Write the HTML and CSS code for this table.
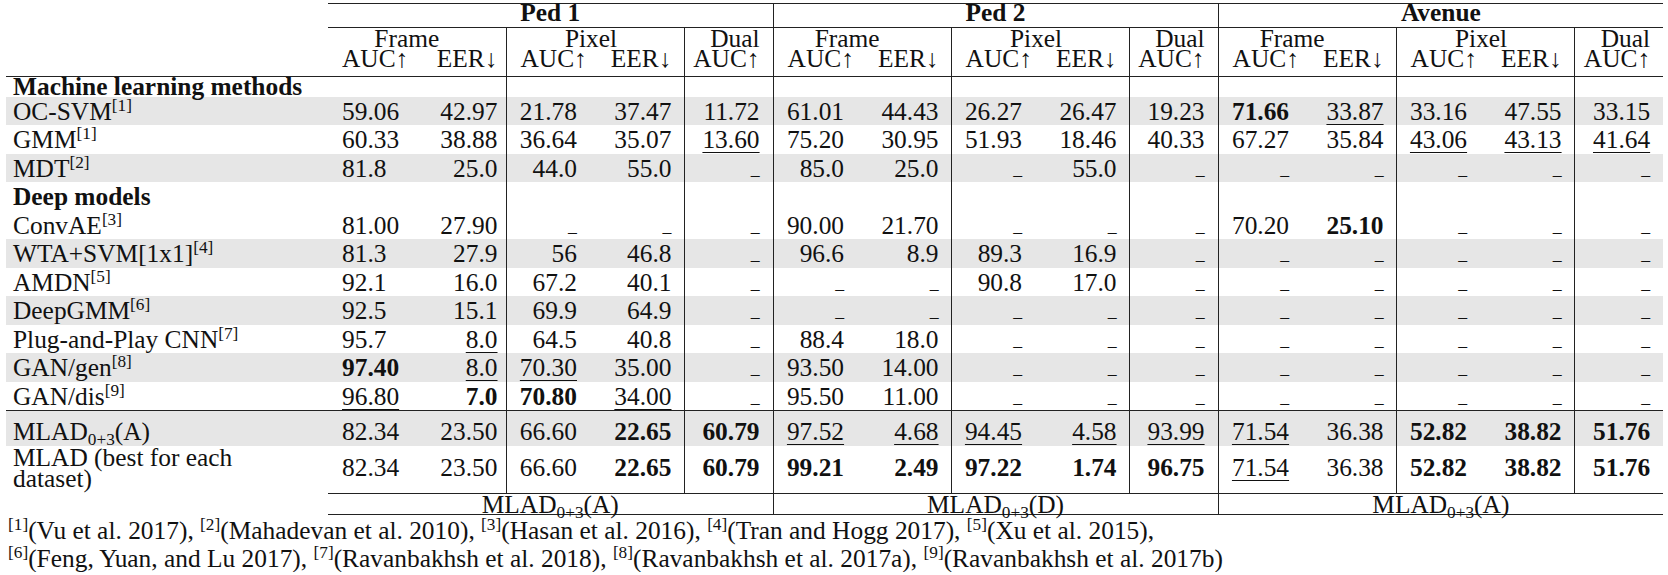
FILE: index.html
```html
<!DOCTYPE html>
<html lang="en">
<head>
  <meta charset="UTF-8">
  <title>Anomaly detection results</title>
  <link rel="stylesheet" href="styles.css">
</head>
<body>
  <div class="page">
    <table class="results">
      <colgroup>
        <col class="c-label">
        <col span="15" class="c-num">
      </colgroup>
      <thead>
        <tr class="grp">
          <th></th>
          <th colspan="5">Ped 1</th>
          <th colspan="5">Ped 2</th>
          <th colspan="5">Avenue</th>
        </tr>
        <tr class="sub">
          <th></th>
          <th colspan="2" class="frame first">Frame</th><th colspan="2" class="pixel">Pixel</th><th class="dual">Dual</th>
          <th colspan="2" class="frame">Frame</th><th colspan="2" class="pixel">Pixel</th><th class="dual">Dual</th>
          <th colspan="2" class="frame">Frame</th><th colspan="2" class="pixel">Pixel</th><th class="dual">Dual</th>
        </tr>
        <tr class="metric">
          <th></th>
          <th>AUC↑</th><th>EER↓</th><th>AUC↑</th><th>EER↓</th><th>AUC↑</th>
          <th>AUC↑</th><th>EER↓</th><th>AUC↑</th><th>EER↓</th><th>AUC↑</th>
          <th>AUC↑</th><th>EER↓</th><th>AUC↑</th><th>EER↓</th><th>AUC↑</th>
        </tr>
      </thead>
      <tbody>
        <tr class="section lead">
          <td>Machine learning methods</td>
          <td></td><td></td><td></td><td></td><td></td>
          <td></td><td></td><td></td><td></td><td></td>
          <td></td><td></td><td></td><td></td><td></td>
        </tr>
        <tr class="alt">
          <td>OC-SVM<sup>[1]</sup></td>
          <td>59.06</td><td>42.97</td><td>21.78</td><td>37.47</td><td>11.72</td>
          <td>61.01</td><td>44.43</td><td>26.27</td><td>26.47</td><td>19.23</td>
          <td><b>71.66</b></td><td><u>33.87</u></td><td>33.16</td><td>47.55</td><td>33.15</td>
        </tr>
        <tr>
          <td>GMM<sup>[1]</sup></td>
          <td>60.33</td><td>38.88</td><td>36.64</td><td>35.07</td><td><u>13.60</u></td>
          <td>75.20</td><td>30.95</td><td>51.93</td><td>18.46</td><td>40.33</td>
          <td>67.27</td><td>35.84</td><td><u>43.06</u></td><td><u>43.13</u></td><td><u>41.64</u></td>
        </tr>
        <tr class="alt">
          <td>MDT<sup>[2]</sup></td>
          <td>81.8</td><td>25.0</td><td>44.0</td><td>55.0</td><td><span class="na">–</span></td>
          <td>85.0</td><td>25.0</td><td><span class="na">–</span></td><td>55.0</td><td><span class="na">–</span></td>
          <td><span class="na">–</span></td><td><span class="na">–</span></td><td><span class="na">–</span></td><td><span class="na">–</span></td><td><span class="na">–</span></td>
        </tr>
        <tr class="section">
          <td>Deep models</td>
          <td></td><td></td><td></td><td></td><td></td>
          <td></td><td></td><td></td><td></td><td></td>
          <td></td><td></td><td></td><td></td><td></td>
        </tr>
        <tr>
          <td>ConvAE<sup>[3]</sup></td>
          <td>81.00</td><td>27.90</td><td><span class="na">–</span></td><td><span class="na">–</span></td><td><span class="na">–</span></td>
          <td>90.00</td><td>21.70</td><td><span class="na">–</span></td><td><span class="na">–</span></td><td><span class="na">–</span></td>
          <td>70.20</td><td><b>25.10</b></td><td><span class="na">–</span></td><td><span class="na">–</span></td><td><span class="na">–</span></td>
        </tr>
        <tr class="alt">
          <td>WTA+SVM[1x1]<sup>[4]</sup></td>
          <td>81.3</td><td>27.9</td><td>56</td><td>46.8</td><td><span class="na">–</span></td>
          <td>96.6</td><td>8.9</td><td>89.3</td><td>16.9</td><td><span class="na">–</span></td>
          <td><span class="na">–</span></td><td><span class="na">–</span></td><td><span class="na">–</span></td><td><span class="na">–</span></td><td><span class="na">–</span></td>
        </tr>
        <tr>
          <td>AMDN<sup>[5]</sup></td>
          <td>92.1</td><td>16.0</td><td>67.2</td><td>40.1</td><td><span class="na">–</span></td>
          <td><span class="na">–</span></td><td><span class="na">–</span></td><td>90.8</td><td>17.0</td><td><span class="na">–</span></td>
          <td><span class="na">–</span></td><td><span class="na">–</span></td><td><span class="na">–</span></td><td><span class="na">–</span></td><td><span class="na">–</span></td>
        </tr>
        <tr class="alt">
          <td>DeepGMM<sup>[6]</sup></td>
          <td>92.5</td><td>15.1</td><td>69.9</td><td>64.9</td><td><span class="na">–</span></td>
          <td><span class="na">–</span></td><td><span class="na">–</span></td><td><span class="na">–</span></td><td><span class="na">–</span></td><td><span class="na">–</span></td>
          <td><span class="na">–</span></td><td><span class="na">–</span></td><td><span class="na">–</span></td><td><span class="na">–</span></td><td><span class="na">–</span></td>
        </tr>
        <tr>
          <td>Plug-and-Play CNN<sup>[7]</sup></td>
          <td>95.7</td><td><u>8.0</u></td><td>64.5</td><td>40.8</td><td><span class="na">–</span></td>
          <td>88.4</td><td>18.0</td><td><span class="na">–</span></td><td><span class="na">–</span></td><td><span class="na">–</span></td>
          <td><span class="na">–</span></td><td><span class="na">–</span></td><td><span class="na">–</span></td><td><span class="na">–</span></td><td><span class="na">–</span></td>
        </tr>
        <tr class="alt">
          <td>GAN/gen<sup>[8]</sup></td>
          <td><b>97.40</b></td><td><u>8.0</u></td><td><u>70.30</u></td><td>35.00</td><td><span class="na">–</span></td>
          <td>93.50</td><td>14.00</td><td><span class="na">–</span></td><td><span class="na">–</span></td><td><span class="na">–</span></td>
          <td><span class="na">–</span></td><td><span class="na">–</span></td><td><span class="na">–</span></td><td><span class="na">–</span></td><td><span class="na">–</span></td>
        </tr>
        <tr>
          <td>GAN/dis<sup>[9]</sup></td>
          <td><u>96.80</u></td><td><b>7.0</b></td><td><b>70.80</b></td><td><u>34.00</u></td><td><span class="na">–</span></td>
          <td>95.50</td><td>11.00</td><td><span class="na">–</span></td><td><span class="na">–</span></td><td><span class="na">–</span></td>
          <td><span class="na">–</span></td><td><span class="na">–</span></td><td><span class="na">–</span></td><td><span class="na">–</span></td><td><span class="na">–</span></td>
        </tr>
        <tr class="alt ours">
          <td>MLAD<sub>0+3</sub>(A)</td>
          <td>82.34</td><td>23.50</td><td>66.60</td><td><b>22.65</b></td><td><b>60.79</b></td>
          <td><u>97.52</u></td><td><u>4.68</u></td><td><u>94.45</u></td><td><u>4.58</u></td><td><u>93.99</u></td>
          <td><u>71.54</u></td><td>36.38</td><td><b>52.82</b></td><td><b>38.82</b></td><td><b>51.76</b></td>
        </tr>
        <tr class="best">
          <td class="two-line">MLAD (best for each<br>dataset)</td>
          <td>82.34</td><td>23.50</td><td>66.60</td><td><b>22.65</b></td><td><b>60.79</b></td>
          <td><b>99.21</b></td><td><b>2.49</b></td><td><b>97.22</b></td><td><b>1.74</b></td><td><b>96.75</b></td>
          <td><u>71.54</u></td><td>36.38</td><td><b>52.82</b></td><td><b>38.82</b></td><td><b>51.76</b></td>
        </tr>
      </tbody>
      <tfoot>
        <tr class="used">
          <td></td>
          <td colspan="5">MLAD<sub>0+3</sub>(A)</td>
          <td colspan="5">MLAD<sub>0+3</sub>(D)</td>
          <td colspan="5">MLAD<sub>0+3</sub>(A)</td>
        </tr>
      </tfoot>
    </table>

    <div class="notes">
      <p><sup>[1]</sup>(Vu et al. 2017), <sup>[2]</sup>(Mahadevan et al. 2010), <sup>[3]</sup>(Hasan et al. 2016), <sup>[4]</sup>(Tran and Hogg 2017), <sup>[5]</sup>(Xu et al. 2015),</p>
      <p><sup>[6]</sup>(Feng, Yuan, and Lu 2017), <sup>[7]</sup>(Ravanbakhsh et al. 2018), <sup>[8]</sup>(Ravanbakhsh et al. 2017a), <sup>[9]</sup>(Ravanbakhsh et al. 2017b)</p>
    </div>
  </div>
</body>
</html>
```

FILE: styles.css
```css
body {
  margin: 0;
  background-color: #fff;
  color: #111;
  font-family: "Liberation Serif", "Times New Roman", serif;
}

.page {
  padding: 3px 5px 0 6px;
}

/* table */
.results {
  border-collapse: collapse;
  table-layout: fixed;
  width: 1657px;
  font-size: 25.4px;
  line-height: 24px;
}

.c-label {
  width: 322px;
}

.c-num {
  width: 89px;
}

.results th,
.results td {
  padding: 0;
  font-weight: normal;
  white-space: nowrap;
  text-align: right;
  vertical-align: middle;
}

.results b {
  font-weight: bold;
}

.results u {
  text-decoration: underline;
  text-decoration-thickness: 1px;
  text-underline-offset: 4px;
}

sup {
  font-size: 0.68em;
  line-height: 0;
  vertical-align: 0.55em;
}

sub {
  font-size: 0.68em;
  line-height: 0;
  vertical-align: -0.3em;
}

.na {
  font-size: 0.7em;
  line-height: 0;
  vertical-align: -0.25em;
}

/* column alignment */
.results td:first-child,
.results th:first-child {
  text-align: left;
  padding-left: 7px;
}

.results tbody td:nth-child(2) {
  text-align: left;
  padding-left: 14px;
}

.results tbody td:nth-child(4),
.results tbody td:nth-child(7),
.results tbody td:nth-child(9),
.results tbody td:nth-child(12),
.results tbody td:nth-child(14) {
  padding-right: 18px;
}

.results tbody td:nth-child(3) {
  padding-right: 8px;
}

.results tbody td:nth-child(5),
.results tbody td:nth-child(8),
.results tbody td:nth-child(10),
.results tbody td:nth-child(13),
.results tbody td:nth-child(15) {
  padding-right: 12px;
}

.results tbody td:nth-child(6),
.results tbody td:nth-child(11),
.results tbody td:nth-child(16),
.sub .dual {
  padding-right: 13px;
}

/* metric headers: AUC sits where the numbers start, EER/Dual end with them */
.metric th:nth-child(2),
.metric th:nth-child(4),
.metric th:nth-child(7),
.metric th:nth-child(9),
.metric th:nth-child(12),
.metric th:nth-child(14) {
  text-align: left;
  padding-left: 14px;
}

.metric th:nth-child(3) {
  padding-right: 8px;
}

.metric th:nth-child(5),
.metric th:nth-child(8),
.metric th:nth-child(10),
.metric th:nth-child(13),
.metric th:nth-child(15) {
  padding-right: 12px;
}

.metric th:nth-child(6),
.metric th:nth-child(11),
.metric th:nth-child(16) {
  padding-right: 13px;
}

/* vertical rules */
.metric th:nth-child(4),
.metric th:nth-child(6),
.metric th:nth-child(7),
.metric th:nth-child(9),
.metric th:nth-child(11),
.metric th:nth-child(12),
.metric th:nth-child(14),
.metric th:nth-child(16),
.results tbody td:nth-child(4),
.results tbody td:nth-child(6),
.results tbody td:nth-child(7),
.results tbody td:nth-child(9),
.results tbody td:nth-child(11),
.results tbody td:nth-child(12),
.results tbody td:nth-child(14),
.results tbody td:nth-child(16),
.sub th:nth-child(n+3) {
  border-left: 1px solid #222;
}

/* header rows */
.grp th {
  height: 23px;
  line-height: 16px;
  vertical-align: top;
  font-weight: bold;
  text-align: center;
}

.grp th:nth-child(n+2) {
  border-top: 1px solid #222;
  border-bottom: 1px solid #222;
}

.grp th:nth-child(n+3) {
  border-left: 1px solid #222;
}

.sub th {
  height: 20px;
  line-height: 20px;
  vertical-align: top;
  text-align: center;
}

.sub .frame {
  padding-right: 30px;
}

.sub .frame.first {
  padding-right: 20px;
}

.sub .pixel {
  padding-right: 8px;
}

.sub th.dual {
  text-align: right;
}

.metric th {
  height: 28px;
  line-height: 21px;
  vertical-align: top;
  border-bottom: 1px solid #222;
}

/* body rows */
.results tbody td {
  height: 28.5px;
}

.results tbody .lead td {
  height: 19.5px;
  line-height: 19px;
  vertical-align: top;
}

.section td:first-child {
  font-weight: bold;
}

.alt td {
  background-color: #e6e6e6;
}

.results tbody .ours td {
  height: 31px;
  padding-top: 4px;
  border-top: 1px solid #222;
}

.results tbody .best td {
  height: 41px;
  padding-bottom: 6px;
}

.results tbody .best .two-line {
  white-space: normal;
  line-height: 21px;
  vertical-align: top;
  padding-top: 1px;
  padding-bottom: 0;
  height: 46px;
}

.best td:nth-child(n+2) {
  border-bottom: 1px solid #222;
}

/* footer row */
.used td {
  height: 19px;
  line-height: 20px;
  text-align: center;
}

.used td:nth-child(n+2) {
  border-bottom: 1px solid #222;
}

.used td:nth-child(n+3) {
  border-left: 1px solid #222;
}

/* references */
.notes {
  font-size: 25.4px;
  line-height: 28px;
  padding-top: 1px;
}

.notes p {
  margin: 0;
  padding-left: 2px;
}
```
